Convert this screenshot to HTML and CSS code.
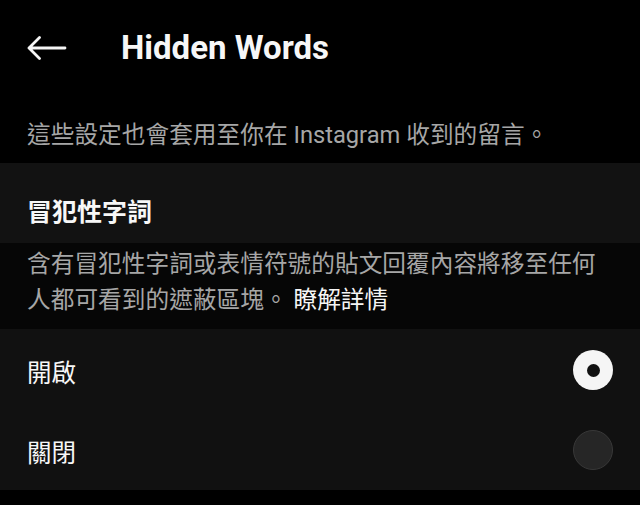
FILE: index.html
```html
<!DOCTYPE html>
<html lang="zh-Hant">
<head>
<meta charset="utf-8">
<title>Hidden Words</title>
<link rel="stylesheet" href="styles.css">
</head>
<body>
<div class="app">
  <header class="topbar">
    <svg class="back" width="40" height="24" viewBox="0 0 40 24" aria-hidden="true">
      <path d="M2 12 H38 M12.5 1.5 L2 12 L12.5 22.5" fill="none" stroke="#f5f5f5" stroke-width="2.8" stroke-linecap="round" stroke-linejoin="round"/>
    </svg>
    <h1 class="title">Hidden Words</h1>
  </header>
  <p class="note">這些設定也會套用至你在 Instagram 收到的留言。</p>
  <section class="group-head">冒犯性字詞</section>
  <p class="group-desc">含有冒犯性字詞或表情符號的貼文回覆內容將移至任何人都可看到的遮蔽區塊。 <span class="link">瞭解詳情</span></p>
  <div class="options">
    <div class="row">
      <span class="label">開啟</span>
      <span class="radio radio-on"></span>
    </div>
    <div class="row">
      <span class="label">關閉</span>
      <span class="radio radio-off"></span>
    </div>
  </div>
</div>
</body>
</html>
```

FILE: styles.css
```css
html, body {
  margin: 0;
  padding: 0;
  background: #000;
}
body {
  font-family: Roboto, "Noto Sans CJK TC", "Noto Sans", sans-serif;
  color: #f5f5f5;
}
.app {
  width: 640px;
  height: 505px;
  overflow: hidden;
  background: #000;
}
.topbar {
  height: 92px;
  display: flex;
  align-items: center;
  padding-left: 27px;
  box-sizing: border-box;
}
.back {
  display: block;
  flex: none;
  margin-top: 4px;
}
.title {
  margin: 4px 0 0 54px;
  font-size: 33px;
  font-weight: 700;
  line-height: 40px;
  color: #f7f7f7;
}
.note {
  margin: 0;
  height: 71px;
  box-sizing: border-box;
  padding: 26px 27px 0;
  font-size: 23.7px;
  line-height: 34px;
  color: #a6a6a6;
  white-space: nowrap;
}
.group-head {
  height: 80px;
  box-sizing: border-box;
  padding: 33px 27px 0;
  background: #121212;
  font-size: 25px;
  font-weight: 700;
  line-height: 34px;
  color: #f7f7f7;
}
.group-desc {
  margin: 0;
  height: 86px;
  box-sizing: border-box;
  padding: 3px 27px 0;
  background: #060606;
  font-size: 23.7px;
  line-height: 36px;
  color: #a6a6a6;
}
.link {
  display: inline-block;
  line-height: 36px;
  vertical-align: top;
  color: #f5f5f5;
}
.options {
  height: 161px;
  box-sizing: border-box;
  padding-top: 1px;
  background: #111111;
}
.row {
  height: 80px;
  display: flex;
  align-items: center;
  justify-content: space-between;
  padding: 0 27px;
}
.label {
  padding-top: 7px;
  font-size: 24.5px;
  line-height: 34px;
  color: #f7f7f7;
}
.radio {
  width: 40px;
  height: 40px;
  box-sizing: border-box;
  border-radius: 50%;
  flex: none;
}
.radio-on {
  background: #f5f5f5;
  display: flex;
  align-items: center;
  justify-content: center;
}
.radio-on::after {
  content: "";
  width: 13px;
  height: 13px;
  border-radius: 50%;
  background: #111;
}
.radio-off {
  background: #262626;
  border: 1.5px solid #383838;
}
```
